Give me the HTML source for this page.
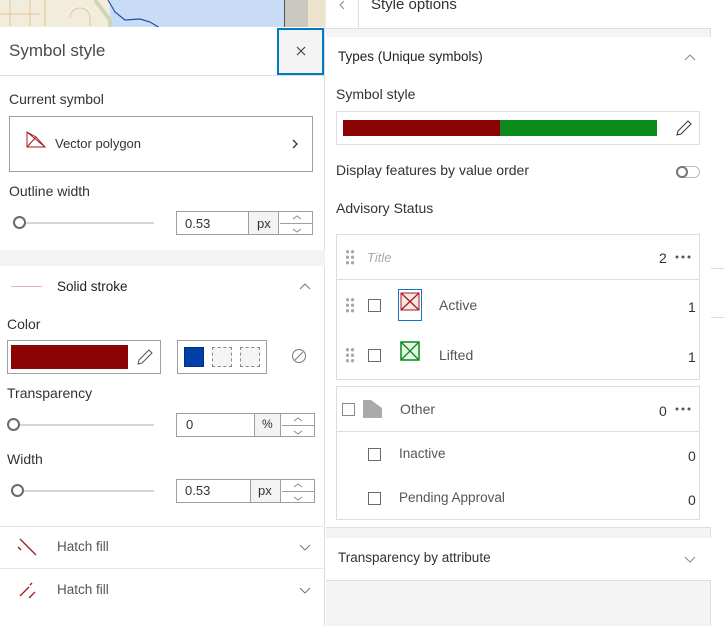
<!DOCTYPE html>
<html><head><meta charset="utf-8"><style>
*{box-sizing:border-box;margin:0;padding:0}
body{width:724px;height:626px;overflow:hidden;position:relative;background:#fff;font-family:"Liberation Sans",sans-serif;color:#323232;font-size:14px}
.a{position:absolute}
.t{position:absolute;white-space:nowrap}
.box{position:absolute;border:1px solid #9e9e9e;background:#fff}
.chk{position:absolute;width:13px;height:13px;border:1px solid #6a6a6a;background:#fff}
.dots{position:absolute;width:10px;height:16px;background-image:radial-gradient(circle,#aaa 1.6px,transparent 1.8px);background-size:5px 5.5px}
</style></head><body>
<!-- map -->
<div class="a" style="left:0;top:0;width:330px;height:28px;background:#f1ecdc"></div>
<div class="a" style="left:110px;top:0;width:175px;height:28px;background:#c8dcf6"></div>
<svg class="a" style="left:0;top:0" width="330" height="28"><path d="M108 0 L115 12 L125 20 L140 19 L150 22 L160 28" stroke="#1e4fa8" stroke-width="1.2" fill="none"/><path d="M10 0V26M30 0V26M45 0V26M0 14H40M70 18 a10 10 0 0 1 20 0V26" stroke="#e4c890" fill="none"/><path d="M95 0 L110 20 L110 28" stroke="#cfd6b8" stroke-width="4" fill="none"/></svg>
<div class="a" style="left:284px;top:0;width:41px;height:28px;background:#c9c7c0;border-left:1px solid #555"></div>
<div class="a" style="left:308px;top:0;width:17px;height:28px;background:#ede3cd"></div>

<!-- left panel -->
<div class="a" style="left:0;top:27px;width:325px;height:599px;background:#fff;border-right:1px solid #ddd"></div>
<div class="t" style="left:9px;top:41px;font-size:17px;color:#4a4a4a">Symbol style</div>
<div class="a" style="left:0;top:75px;width:325px;height:1px;background:#ddd"></div>
<div class="a" style="left:277px;top:28px;width:47px;height:47px;border:2px solid #007ac2;background:#f3f3f3"></div>
<svg class="a" style="left:296px;top:46px" width="10" height="10"><path d="M1 1L9 9M9 1L1 9" stroke="#444" stroke-width="1.2"/></svg>
<div class="t" style="left:9px;top:91px">Current symbol</div>
<div class="box" style="left:9px;top:116px;width:304px;height:56px"></div>
<svg class="a" style="left:26px;top:131px" width="20" height="18"><path d="M1 1 L10 6 L19 16 L1 16 Z M1 1 L19 16 M1 16 L10 6" stroke="#a31c1c" stroke-width="1" fill="none"/></svg>
<div class="t" style="left:55px;top:136px;font-size:13px">Vector polygon</div>
<svg class="a" style="left:292px;top:139px" width="7" height="10"><path d="M1 1L5 5L1 9" stroke="#333" fill="none" stroke-width="1.3"/></svg>
<div class="t" style="left:9px;top:183px">Outline width</div>
<div class="a" style="left:19px;top:222px;width:135px;height:2px;background:#d6d6d6"></div>
<div class="a" style="left:13px;top:216px;width:13px;height:13px;border:2px solid #6a6a6a;border-radius:50%;background:#fff"></div>
<div class="box" style="left:176px;top:211px;width:137px;height:24px"></div>
<div class="t" style="left:185px;top:216px;font-size:13px">0.53</div>
<div class="a" style="left:248px;top:212px;width:31px;height:22px;background:#f3f3f3;border-left:1px solid #9e9e9e;border-right:1px solid #9e9e9e"></div>
<div class="t" style="left:257px;top:216px;font-size:13px">px</div>
<div class="a" style="left:280px;top:223px;width:33px;height:1px;background:#9e9e9e"></div>
<svg class="a" style="left:291px;top:214px" width="12" height="20"><path d="M2 5L6 2L10 5M2 15L6 18L10 15" stroke="#888" fill="none"/></svg>
<div class="a" style="left:0;top:250px;width:325px;height:16px;background:#f3f3f3"></div>

<div class="a" style="left:11px;top:286px;width:31px;height:1px;background:#e9b3b3"></div>
<div class="t" style="left:57px;top:279px;font-size:13.5px;color:#222">Solid stroke</div>
<svg class="a" style="left:299px;top:283px" width="12" height="8"><path d="M1 6L6 1L11 6" stroke="#777" fill="none"/></svg>
<div class="t" style="left:7px;top:316px">Color</div>
<div class="box" style="left:7px;top:340px;width:154px;height:34px"></div>
<div class="a" style="left:11px;top:345px;width:117px;height:24px;background:#8b0303"></div>
<svg class="a" style="left:136px;top:348px" width="18" height="18"><path d="M2 16 L3 12 L13 2 L16 5 L6 15 Z" stroke="#555" fill="none"/></svg>
<div class="box" style="left:177px;top:340px;width:90px;height:34px"></div>
<div class="a" style="left:184px;top:347px;width:20px;height:20px;background:#0040a8;border:1px solid #003080"></div>
<div class="a" style="left:212px;top:347px;width:20px;height:20px;background:#f5f5f5;border:1px dashed #888"></div>
<div class="a" style="left:240px;top:347px;width:20px;height:20px;background:#f5f5f5;border:1px dashed #888"></div>
<svg class="a" style="left:291px;top:348px" width="16" height="16"><circle cx="8" cy="8" r="6.5" stroke="#777" fill="none"/><path d="M4 12 L12 4" stroke="#777"/></svg>
<div class="t" style="left:7px;top:385px">Transparency</div>
<div class="a" style="left:14px;top:424px;width:140px;height:2px;background:#d6d6d6"></div>
<div class="a" style="left:7px;top:418px;width:13px;height:13px;border:2px solid #6a6a6a;border-radius:50%;background:#fff"></div>
<div class="box" style="left:176px;top:413px;width:139px;height:24px"></div>
<div class="t" style="left:186px;top:417px;font-size:13px">0</div>
<div class="a" style="left:254px;top:414px;width:27px;height:22px;background:#f3f3f3;border-left:1px solid #9e9e9e;border-right:1px solid #9e9e9e"></div>
<div class="t" style="left:262px;top:417px;font-size:12px">%</div>
<div class="a" style="left:282px;top:425px;width:33px;height:1px;background:#9e9e9e"></div>
<svg class="a" style="left:292px;top:416px" width="12" height="20"><path d="M2 5L6 2L10 5M2 15L6 18L10 15" stroke="#888" fill="none"/></svg>
<div class="t" style="left:7px;top:451px">Width</div>
<div class="a" style="left:18px;top:490px;width:136px;height:2px;background:#d6d6d6"></div>
<div class="a" style="left:11px;top:484px;width:13px;height:13px;border:2px solid #6a6a6a;border-radius:50%;background:#fff"></div>
<div class="box" style="left:176px;top:479px;width:139px;height:24px"></div>
<div class="t" style="left:185px;top:483px;font-size:13px">0.53</div>
<div class="a" style="left:250px;top:480px;width:31px;height:22px;background:#f3f3f3;border-left:1px solid #9e9e9e;border-right:1px solid #9e9e9e"></div>
<div class="t" style="left:258px;top:483px;font-size:13px">px</div>
<div class="a" style="left:282px;top:491px;width:33px;height:1px;background:#9e9e9e"></div>
<svg class="a" style="left:292px;top:482px" width="12" height="20"><path d="M2 5L6 2L10 5M2 15L6 18L10 15" stroke="#888" fill="none"/></svg>
<div class="a" style="left:0;top:526px;width:325px;height:1px;background:#e6e6e6"></div>
<svg class="a" style="left:16px;top:537px" width="22" height="20"><path d="M4 2 L20 18 M2 10 L5 13" stroke="#a31c1c" stroke-width="1.3"/></svg>
<div class="t" style="left:57px;top:539px;font-size:13.5px;color:#555">Hatch fill</div>
<svg class="a" style="left:299px;top:544px" width="12" height="8"><path d="M1 1L6 6L11 1" stroke="#777" fill="none"/></svg>
<div class="a" style="left:0;top:568px;width:325px;height:1px;background:#e6e6e6"></div>
<svg class="a" style="left:16px;top:580px" width="22" height="20"><path d="M4 16 L13 7 M14 5 L16 3 M13 18 L19 12" stroke="#a31c1c" stroke-width="1.3"/></svg>
<div class="t" style="left:57px;top:582px;font-size:13.5px;color:#555">Hatch fill</div>
<svg class="a" style="left:299px;top:587px" width="12" height="8"><path d="M1 1L6 6L11 1" stroke="#777" fill="none"/></svg>

<!-- right panel -->
<div class="a" style="left:326px;top:0;width:385px;height:626px;background:#f4f4f4;border-right:1px solid #ddd"></div>
<div class="a" style="left:326px;top:0;width:385px;height:29px;background:#fff;border-bottom:1px solid #ddd"></div>
<div class="a" style="left:358px;top:0;width:1px;height:29px;background:#ddd"></div>
<svg class="a" style="left:338px;top:0" width="8" height="10"><path d="M6 1L2 5L6 9" stroke="#888" fill="none"/></svg>
<div class="t" style="left:371px;top:-4px;font-size:15px">Style options</div>
<div class="a" style="left:326px;top:37px;width:385px;height:491px;background:#fff;border-bottom:1px solid #ddd"></div>
<div class="t" style="left:338px;top:49px;font-size:13.5px;color:#222">Types (Unique symbols)</div>
<svg class="a" style="left:684px;top:54px" width="12" height="8"><path d="M1 6L6 1L11 6" stroke="#888" fill="none"/></svg>
<div class="t" style="left:336px;top:86px">Symbol style</div>
<div class="a" style="left:336px;top:111px;width:364px;height:34px;border:1px solid #e0e0e0"></div>
<div class="a" style="left:343px;top:120px;width:157px;height:16px;background:#8b0303"></div>
<div class="a" style="left:500px;top:120px;width:157px;height:16px;background:#098a1a"></div>
<svg class="a" style="left:675px;top:119px" width="18" height="18"><path d="M2 16 L3 12 L13 2 L16 5 L6 15 Z" stroke="#333" fill="none"/></svg>
<div class="t" style="left:336px;top:162px">Display features by value order</div>
<div class="a" style="left:676px;top:166px;width:24px;height:12px;border:1px solid #bbb;border-radius:7px"></div>
<div class="a" style="left:676px;top:166px;width:12px;height:12px;border:2px solid #777;border-radius:50%;background:#fff"></div>
<div class="t" style="left:336px;top:200px">Advisory Status</div>
<div class="a" style="left:336px;top:234px;width:364px;height:146px;border:1px solid #ddd"></div>
<div class="a" style="left:337px;top:279px;width:362px;height:1px;background:#ddd"></div>
<div class="dots" style="left:345px;top:249px"></div>
<div class="t" style="left:367px;top:250px;font-style:italic;color:#aaa;font-size:13px">Title</div>
<div class="t" style="left:659px;top:250px">2</div>
<svg class="a" style="left:675px;top:255px" width="16" height="4"><circle cx="2" cy="2" r="1.5" fill="#555"/><circle cx="8" cy="2" r="1.5" fill="#555"/><circle cx="14" cy="2" r="1.5" fill="#555"/></svg>
<div class="dots" style="left:345px;top:297px"></div>
<div class="chk" style="left:368px;top:299px"></div>
<div class="a" style="left:398px;top:289px;width:24px;height:32px;border:1px solid #1a72c2"></div>
<svg class="a" style="left:400px;top:292px" width="20" height="20"><rect x="1" y="1" width="18" height="17" stroke="#a31c1c" fill="#f7e7e7"/><path d="M1 1L19 18M19 1L1 18" stroke="#a31c1c" stroke-width="1.3"/></svg>
<div class="t" style="left:439px;top:297px;color:#555">Active</div>
<div class="t" style="left:688px;top:299px">1</div>
<div class="dots" style="left:345px;top:347px"></div>
<div class="chk" style="left:368px;top:349px"></div>
<svg class="a" style="left:400px;top:341px" width="20" height="20"><rect x="1" y="1" width="18" height="18" stroke="#098a1a" stroke-width="1.5" fill="#e7f5e8"/><path d="M1 1L19 19M19 1L1 19" stroke="#098a1a" stroke-width="1.3"/></svg>
<div class="t" style="left:439px;top:347px;color:#555">Lifted</div>
<div class="t" style="left:688px;top:349px">1</div>

<div class="a" style="left:336px;top:386px;width:364px;height:134px;border:1px solid #ddd"></div>
<div class="a" style="left:337px;top:431px;width:362px;height:1px;background:#ddd"></div>
<div class="chk" style="left:342px;top:403px;border-color:#888"></div>
<svg class="a" style="left:363px;top:400px" width="20" height="18"><path d="M0 0 L8 0 L19 8 V18 H0 Z" fill="#aaa"/></svg>
<div class="t" style="left:400px;top:401px;color:#555">Other</div>
<div class="t" style="left:659px;top:403px">0</div>
<svg class="a" style="left:675px;top:407px" width="16" height="4"><circle cx="2" cy="2" r="1.5" fill="#555"/><circle cx="8" cy="2" r="1.5" fill="#555"/><circle cx="14" cy="2" r="1.5" fill="#555"/></svg>
<div class="chk" style="left:368px;top:448px"></div>
<div class="t" style="left:399px;top:446px;color:#555;font-size:13.5px">Inactive</div>
<div class="t" style="left:688px;top:448px">0</div>
<div class="chk" style="left:368px;top:492px"></div>
<div class="t" style="left:399px;top:490px;color:#555;font-size:13.5px">Pending Approval</div>
<div class="t" style="left:688px;top:492px">0</div>

<div class="a" style="left:326px;top:538px;width:385px;height:43px;background:#fff;border-bottom:1px solid #ddd"></div>
<div class="t" style="left:338px;top:550px;font-size:13.5px">Transparency by attribute</div>
<svg class="a" style="left:684px;top:556px" width="12" height="8"><path d="M1 1L6 6L11 1" stroke="#888" fill="none"/></svg>

<div class="a" style="left:711px;top:268px;width:13px;height:1px;background:#ddd"></div>
<div class="a" style="left:711px;top:317px;width:13px;height:1px;background:#ddd"></div>
</body></html>
